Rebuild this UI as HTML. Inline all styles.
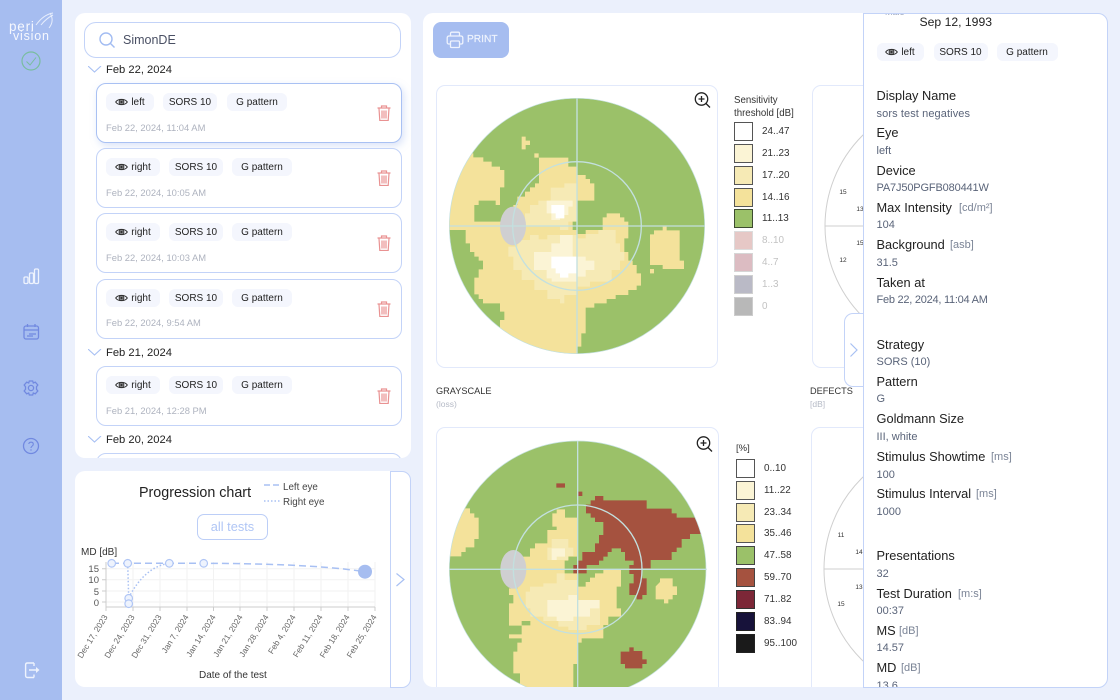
<!DOCTYPE html>
<html><head><meta charset="utf-8"><style>
html,body{margin:0;padding:0;width:1120px;height:700px;overflow:hidden;background:#ebf0fc;font-family:"Liberation Sans",sans-serif;color:#222}
*{box-sizing:border-box}
#r{position:absolute;left:0;top:0;width:1120px;height:700px;overflow:hidden;background:#ebf0fc;filter:blur(.35px)}
.a{position:absolute}
.t{position:absolute;white-space:nowrap;line-height:16px}
.side{left:0;top:0;width:62px;height:700px;background:#a6bdf0}
.panel{background:#fff;border-radius:10px}
.card{position:absolute;left:96px;width:306px;height:60px;border:1.5px solid #c3d3f8;border-radius:10px;background:#fff}
.chip{position:absolute;height:18px;background:#f4f6fd;border-radius:6px;font-size:10px;line-height:20px;color:#222;text-align:center;white-space:nowrap}
.date{font-size:9.4px;color:#aeb3bf;margin-top:1px}
.day{font-size:11.2px;color:#222;margin-top:1px}
.l{font-size:12.8px;color:#222;margin-top:-1px}
.v{font-size:11px;color:#5a6479}
.u{font-size:11px;color:#7b8496;margin-top:0}
.sw{position:absolute;width:19px;height:19px;border:1.5px solid #555}
.lg{font-size:9.900px;color:#333;margin-top:1px}
</style></head><body><div id="r">
<div class="a side"></div>

<svg class="a" style="left:0;top:0" width="62" height="700" viewBox="0 0 62 700" fill="none">
<path d="M36 25C41 18 47 14 53 13M41 25C45 20 49 17 53 15M50 13C53 18 53 23 49 28" stroke="#e6edfc" stroke-width="1"/>
<circle cx="31" cy="61" r="9" stroke="#79bd9f" stroke-width="1.2"/><path d="M26.500 61.500L30 65L36 57.500" stroke="#79bd9f"/>
<g stroke="#eef3fd" stroke-width="1.300"><rect x="24" y="277" width="4" height="6.500" rx="1.200"/><rect x="29.500" y="273" width="4" height="10.500" rx="1.200"/><rect x="34.500" y="269" width="4" height="14.500" rx="1.200"/></g>
<g stroke="#7189e0" stroke-width="1.300"><rect x="24" y="326" width="14.500" height="13" rx="2"/><path d="M24 330H38.500M27.500 324V327M35 324V327M27 336H33M29 334H36"/></g>
<g stroke="#7189e0" stroke-width="1.300"><circle cx="31" cy="388" r="2.600"/><path d="M29.300 381H32.700L33.300 383L35.300 382.200L37.800 385L36.500 386.700V389.300L37.800 391L35.300 393.800L33.300 393L32.700 395H29.300L28.700 393L26.700 393.800L24.200 391L25.500 389.300V386.700L24.200 385L26.700 382.200L28.700 383Z"/></g>
<circle cx="31" cy="446" r="7.500" stroke="#7189e0" stroke-width="1.300"/>
<path d="M28.800 444C29 441.500 33.300 441.500 33.300 444.200C33.300 446 31 446 31 448" stroke="#7189e0" stroke-width="1.100"/><circle cx="31" cy="450" r=".7" fill="#7189e0"/>
<path d="M34 663H27.500C26.300 663 25.600 663.800 25.600 665V675.500C25.600 676.700 26.300 677.500 27.500 677.500H34M34 663V666M34 677.500V674.500M29 670H37" stroke="#eef3fd" stroke-width="1.400"/><path d="M36 667L39.500 670L36 673Z" fill="#eef3fd"/>
</svg>
<div class="t" style="left:9px;top:21px;font-size:13.500px;color:#f6f8fe;letter-spacing:.8px;line-height:12px">peri</div>
<div class="t" style="left:13px;top:30px;font-size:12.500px;color:#f6f8fe;letter-spacing:.8px;line-height:12px">vision</div>

<!-- left list -->
<div class="a panel" style="left:75px;top:13px;width:336px;height:445px"></div>
<div class="a" style="left:84px;top:22px;width:317px;height:36px;border:1.5px solid #c3d3f8;border-radius:12px;background:#fff"></div>
<svg class="a" style="left:98px;top:31px" width="18" height="18" fill="none" stroke="#a2bcf2" stroke-width="1.400"><circle cx="8" cy="8" r="6"/><path d="M12.500 12.500L16.500 16.500"/></svg>
<div class="t" style="left:123px;top:32px;font-size:12.500px;color:#4a5064">SimonDE</div>

<svg width="0" height="0" style="position:absolute"><defs>
<g id="eye" fill="none" stroke="#333" stroke-width="1.100"><path d="M.7 5C3 1.500 10 1.500 12.300 5C10 8.500 3 8.500 .7 5Z"/><circle cx="6.500" cy="5" r="2.300"/><circle cx="6.500" cy="5" r=".8" fill="#333"/></g>
<g id="bin" fill="none" stroke="#e99292" stroke-width="1.200"><path d="M.5 3H13.500M4.500 2.500V1H9.500V2.500M2 3.500L2.800 15.500H11.200L12 3.500M5 5.500V13.500M7 5.500V13.500M9 5.500V13.500"/></g>
<path id="chev" d="M0 0L6.500 6L13 0" fill="none" stroke="#a8c0f3" stroke-width="1.100"/>
</defs></svg>

<svg class="a" style="left:88px;top:66px" width="14" height="8"><use href="#chev"/></svg>
<div class="t day" style="left:106px;top:61px">Feb 22, 2024</div>

<div class="card" style="top:82.500px;border-color:#a9c1f3;box-shadow:2px 3px 8px rgba(150,175,235,.35)"></div>
<div class="card" style="top:148px"></div>
<div class="card" style="top:213px"></div>
<div class="card" style="top:278.500px"></div>
<div class="card" style="top:366px"></div>
<div class="a" style="left:96px;top:453px;width:306px;height:5px;overflow:hidden"><div style="width:306px;height:30px;border:1.500px solid #c3d3f8;border-radius:10px"></div></div>

<!-- row 1 -->
<div class="chip" style="left:106px;top:93px;width:48px;padding-left:16px">left</div><svg class="a" style="left:115px;top:97px" width="13" height="10"><use href="#eye"/></svg>
<div class="chip" style="left:163px;top:93px;width:54px">SORS 10</div><div class="chip" style="left:227px;top:93px;width:60px">G pattern</div>
<div class="t date" style="left:106px;top:119px">Feb 22, 2024, 11:04 AM</div><svg class="a" style="left:377px;top:105px" width="14" height="16"><use href="#bin"/></svg>
<!-- row 2 -->
<div class="chip" style="left:106px;top:158px;width:54px;padding-left:16px">right</div><svg class="a" style="left:115px;top:162px" width="13" height="10"><use href="#eye"/></svg>
<div class="chip" style="left:169px;top:158px;width:54px">SORS 10</div><div class="chip" style="left:232px;top:158px;width:60px">G pattern</div>
<div class="t date" style="left:106px;top:184px">Feb 22, 2024, 10:05 AM</div><svg class="a" style="left:377px;top:170px" width="14" height="16"><use href="#bin"/></svg>
<!-- row 3 -->
<div class="chip" style="left:106px;top:223px;width:54px;padding-left:16px">right</div><svg class="a" style="left:115px;top:227px" width="13" height="10"><use href="#eye"/></svg>
<div class="chip" style="left:169px;top:223px;width:54px">SORS 10</div><div class="chip" style="left:232px;top:223px;width:60px">G pattern</div>
<div class="t date" style="left:106px;top:249px">Feb 22, 2024, 10:03 AM</div><svg class="a" style="left:377px;top:235px" width="14" height="16"><use href="#bin"/></svg>
<!-- row 4 -->
<div class="chip" style="left:106px;top:289px;width:54px;padding-left:16px">right</div><svg class="a" style="left:115px;top:293px" width="13" height="10"><use href="#eye"/></svg>
<div class="chip" style="left:169px;top:289px;width:54px">SORS 10</div><div class="chip" style="left:232px;top:289px;width:60px">G pattern</div>
<div class="t date" style="left:106px;top:314px">Feb 22, 2024, 9:54 AM</div><svg class="a" style="left:377px;top:301px" width="14" height="16"><use href="#bin"/></svg>

<svg class="a" style="left:88px;top:349px" width="14" height="8"><use href="#chev"/></svg>
<div class="t day" style="left:106px;top:344px">Feb 21, 2024</div>
<div class="chip" style="left:106px;top:376px;width:54px;padding-left:16px">right</div><svg class="a" style="left:115px;top:380px" width="13" height="10"><use href="#eye"/></svg>
<div class="chip" style="left:169px;top:376px;width:54px">SORS 10</div><div class="chip" style="left:232px;top:376px;width:60px">G pattern</div>
<div class="t date" style="left:106px;top:402px">Feb 21, 2024, 12:28 PM</div><svg class="a" style="left:377px;top:388px" width="14" height="16"><use href="#bin"/></svg>
<svg class="a" style="left:88px;top:436px" width="14" height="8"><use href="#chev"/></svg>
<div class="t day" style="left:106px;top:431px">Feb 20, 2024</div>

<!-- progression chart -->
<div class="a" style="left:75px;top:471px;width:316px;height:216px;background:#fff;border-radius:10px 0 0 10px"></div>
<div class="a" style="left:390px;top:471px;width:21px;height:217px;background:#fff;border:1.500px solid #c3d3f8;border-radius:0 9px 9px 0"></div>
<svg class="a" style="left:395px;top:572px" width="12" height="16" fill="none" stroke="#a8c0f3" stroke-width="1.200"><path d="M1.500 1.500L9 7.500L1.500 14"/></svg>
<div class="t" style="left:139px;top:485px;font-size:14.300px;color:#222">Progression chart</div>
<div class="t" style="left:283px;top:478px;font-size:9.800px;color:#444;margin-top:1.500px">Left eye</div>
<div class="t" style="left:283px;top:493px;font-size:9.800px;color:#444;margin-top:1.500px">Right eye</div>
<div class="a" style="left:197px;top:514px;width:71px;height:26px;border:1.500px solid #bccef7;border-radius:7px;color:#b0c6f5;font-size:12.800px;line-height:23px;text-align:center">all tests</div>
<div class="t" style="left:81px;top:544.500px;font-size:10px;color:#333">MD [dB]</div>
<svg class="a" style="left:75px;top:471px" width="316" height="217" viewBox="75 471 316 217" fill="none">
<path d="M264 485H280" stroke="#a8c0f3" stroke-width="1.500" stroke-dasharray="6 3"/><path d="M264 501H280" stroke="#a8c0f3" stroke-width="1.500" stroke-dasharray="1.500 2"/>
<g stroke="#f2f2f2"><path d="M106 562V607M133 562V607M160 562V607M187 562V607M213.500 562V607M240 562V607M267 562V607M294 562V607M321 562V607M348 562V607M375 562V607"/><path d="M106 568.700H375M106 579.700H375M106 591H375M106 602H375"/></g>
<path d="M106 607H375M106 607V562M106 607V611M133 607V611M160 607V611M187 607V611M213.500 607V611M240 607V611M267 607V611M294 607V611M321 607V611M348 607V611M375 607V611M102 568.700H106M102 579.700H106M102 591H106M102 602H106" stroke="#ccc"/>
<g fill="#555" font-size="9.500" font-family="Liberation Sans" text-anchor="end"><text x="99" y="572">15</text><text x="99" y="583">10</text><text x="99" y="595">5</text><text x="99" y="606">0</text></g>
<g fill="#666" font-size="8.300" font-family="Liberation Sans" text-anchor="end">
<text transform="translate(108 617) rotate(-58)">Dec 17, 2023</text><text transform="translate(135 617) rotate(-58)">Dec 24, 2023</text><text transform="translate(162 617) rotate(-58)">Dec 31, 2023</text><text transform="translate(189 617) rotate(-58)">Jan 7, 2024</text><text transform="translate(216 617) rotate(-58)">Jan 14, 2024</text><text transform="translate(243 617) rotate(-58)">Jan 21, 2024</text><text transform="translate(269 617) rotate(-58)">Jan 28, 2024</text><text transform="translate(296 617) rotate(-58)">Feb 4, 2024</text><text transform="translate(323 617) rotate(-58)">Feb 11, 2024</text><text transform="translate(350 617) rotate(-58)">Feb 18, 2024</text><text transform="translate(377 617) rotate(-58)">Feb 25, 2024</text></g>
<path d="M112 563.300H204C260 563.500 320 565 365 571.700" stroke="#a8c0f3" stroke-width="1.500" stroke-dasharray="7 4"/>
<path d="M127.700 563.300L128.700 598C135 585 148 566 169.300 563.300" stroke="#a8c0f3" stroke-width="1.500" stroke-dasharray="1.500 2"/>
<g fill="#eef3fd" stroke="#afc5f5" stroke-width="1.200"><circle cx="111.700" cy="563.300" r="3.800"/><circle cx="127.700" cy="563.300" r="3.800"/><circle cx="128.700" cy="598.300" r="3.800"/><circle cx="128.700" cy="603.700" r="3.800"/><circle cx="169.300" cy="563.300" r="3.800"/><circle cx="203.700" cy="563.300" r="3.800"/></g>
<circle cx="365" cy="571.700" r="7" fill="#a6bdf0"/>
</svg>
<div class="t" style="left:199px;top:667px;font-size:10px;color:#333;margin-top:.5px">Date of the test</div>

<!-- main panel -->
<div class="a panel" style="left:423px;top:13px;width:684px;height:674px;overflow:hidden" id="m">
<div class="a" style="left:10px;top:9px;width:76px;height:36px;background:#a6bdf0;border-radius:8px"></div>
<svg class="a" style="left:23px;top:18px" width="18" height="18" fill="none" stroke="#eef3fd" stroke-width="1.300"><path d="M4.500 5V2.500C4.500 1.700 5 1.200 5.800 1.200H12.200C13 1.200 13.500 1.700 13.500 2.500V5M4 13H2.800C1.800 13 1.200 12.400 1.200 11.400V7C1.200 5.800 2 5 3.200 5H14.800C16 5 16.800 5.800 16.800 7V11.400C16.800 12.400 16.200 13 15.200 13H14"/><rect x="4.500" y="10" width="9" height="6.500" rx="1"/></svg>
<div class="t" style="left:44px;top:19px;font-size:10.200px;color:#eef3fd;-webkit-text-stroke:.2px #eef3fd">PRINT</div>

<div class="a" style="left:13px;top:72px;width:282px;height:283px;border:1px solid #e2e9fb;border-radius:9px"></div>
<div class="a" style="left:389px;top:72px;width:120px;height:283px;border:1px solid #e2e9fb;border-radius:9px"></div>
<div class="a" style="left:12.500px;top:414px;width:283px;height:300px;border:1px solid #e2e9fb;border-radius:9px"></div>
<div class="a" style="left:388px;top:414px;width:120px;height:300px;border:1px solid #e2e9fb;border-radius:9px"></div>

<div class="t" style="left:13px;top:370px;font-size:9.200px;color:#333">GRAYSCALE</div>
<div class="t" style="left:13px;top:383px;font-size:8.500px;color:#b5bac6">(loss)</div>
<div class="t" style="left:387px;top:370px;font-size:9.200px;color:#333">DEFECTS</div>
<div class="t" style="left:387px;top:383px;font-size:8.500px;color:#b5bac6">[dB]</div>

<!-- field 1 -->
<svg class="a" style="left:7px;top:67px" width="300" height="300" viewBox="0 0 900 900" shape-rendering="geometricPrecision">
<defs><clipPath id="c1"><circle cx="441" cy="438" r="383"/></clipPath></defs>
<g clip-path="url(#c1)"><rect width="900" height="900" fill="#9bc169"/>
<path fill="#f4e29b" d="M40 220H130V232H160V245H185V260H210V270H223V322H210V375H197V362H146V375H133V425H215L235 385H250V375H262V350H285V335H300V322H315V310H327V233H415V260H441V285H467V297H480V310H493V362H441V462H467V450H518V412H530V400H570V412H583V425H595V475H583V516H595V542H608V555H620V580H633V617H620V630H595V645H557V657H530V670H493V683H467V760H454V800H441V840H200V745H210V720H223V695H210V670H159V657H146V643H133V593H146V568H159V542H146V530H133V516H120V490H107V450H40Z"/>
<path fill="#f4e29b" d="M660 463H672V451H698V440H710V451H749V542H762V567H698V555H660ZM660 567H672V580H660ZM275 170H287V182H300V195H287V208H275ZM313 220H326V233H313Z"/>
<path fill="#f6eab5" d="M362 323H403V310H441V425H415V450H390V440H285V400H300V375H325V362H362ZM235 500H262V480H300V465H441V475H467V462H505V450H557V490H570V516H583V542H570V570H545V605H480V620H441V645H403V670H390V657H352V630H313V600H275V570H250V530H235Z"/>
<path fill="#fbf4d5" d="M350 362H428V380H415V405H390V420H364V400H350ZM312 516H364V490H390V465H428V530H467V542H493V570H467V590H441V605H365V595H350V570H312Z"/>
<path fill="#fff" d="M364 375H403V362H403V415H377V400H364ZM364 530H441V580H415V593H390V580H377V565H364Z"/>
<path fill="#f4e29b" d="M326 465H352V478H326Z"/>
<path fill="#9bc169" d="M428 425H441V438H428ZM428 438H441V450H428Z"/>
<ellipse cx="249" cy="438" rx="39" ry="58" fill="#cfcfd1"/></g>
<g fill="none" stroke="#c3e0df" stroke-width="4"><path d="M57 438H825M441 55V822" /><circle cx="441" cy="438" r="193"/></g>
<circle cx="441" cy="438" r="383" fill="none" stroke="#c3e0df" stroke-width="2"/>
</svg>

<!-- field 2 -->
<svg class="a" style="left:7px;top:407px" width="300" height="280" viewBox="0 0 900 840">
<defs><clipPath id="c2"><circle cx="443" cy="448" r="385"/></clipPath></defs>
<g clip-path="url(#c2)"><rect width="900" height="900" fill="#9bc169"/>
<path fill="#f4e29b" d="M100 265H120V280H133V293H146V357H133V382H107V396H94V409H40V265ZM677 499L690 486V475H728V499H741V525H728V538H715V550H702V538H677Z"/>
<path fill="#f4e29b" d="M367 280H380V268H405V293H441V410H415V422H404V460H441V500H467V486H480V473H495V460H520V450H573V500H560V565H573V590H535V615H520V655H455V668H443V860H270V760H250V695H262V668H275V655H237V643H275V617H237V550H250V525H237V505H262V410H300V385H315V370H352V330H380V320H367Z"/>
<path fill="#9bc169" d="M275 603H301V616H275ZM430 732H441V810H430Z"/>
<path fill="#f6eab5" d="M352 383H365V357H415V383H430V408H415V420H395V460H380V490H340V500H300V515H287V565H301V590H340V603H385V620H415V630H470V615H510V540H441V480H404V460H395V420H352Z"/>
<path fill="#fbf4d5" d="M365 385H405V410H380V420H365ZM352 540H415V525H441V540H508V565H480V590H430V603H380V590H352Z"/>
<path fill="#a5523f" d="M495 228H520V241H650V266H725V280H740V293H800L820 342H780V357H755V383H740V396H725V420H662V445H637V475H650V525H637V538H620V525H598V490H611V462H598V435H611V422H585V396H573V385H545V396H533V410H520V422H507V435H470V460H430V435H445V422H457V396H495V370H507V345H520V306H495V293H482V280H468V254H482V241H495ZM379 190H405V203H379ZM445 215H457V228H445ZM598 682H611V693H637V718H650V732H637V745H585V732H572V695H598Z"/>
<ellipse cx="250" cy="448" rx="39" ry="58" fill="#cfcfd1"/></g>
<g fill="none" stroke="#c3e0df" stroke-width="4"><path d="M58 448H830M443 63V840"/><circle cx="443" cy="448" r="193"/></g>
<circle cx="443" cy="448" r="385" fill="none" stroke="#c3e0df" stroke-width="2"/>
</svg>

<!-- zoom icons -->
<svg class="a" style="left:270px;top:78px" width="18" height="18" fill="none" stroke="#222" stroke-width="1.300"><circle cx="8.500" cy="8" r="6.200"/><path d="M8.500 5V11M5.500 8H11.500M13 12.500L17 16.500"/></svg>
<svg class="a" style="left:272px;top:422px" width="18" height="18" fill="none" stroke="#222" stroke-width="1.300"><circle cx="8.500" cy="8" r="6.200"/><path d="M8.500 5V11M5.500 8H11.500M13 12.500L17 16.500"/></svg>

<!-- right fields partial -->
<svg class="a" style="left:389px;top:72px" width="60" height="290" viewBox="812 85 60 290" fill="none"><circle cx="953" cy="226" r="128" stroke="#cfcfcf" stroke-width="1"/><path d="M825 226H870" stroke="#cfcfcf"/>
<g fill="#333" font-size="6.500" font-family="Liberation Sans" text-anchor="middle"><text x="843" y="194">15</text><text x="860" y="211">13</text><text x="860" y="245">15</text><text x="843" y="262">12</text></g></svg>
<svg class="a" style="left:388px;top:414px" width="60" height="260" viewBox="811 427 60 260" fill="none"><circle cx="952" cy="569" r="128" stroke="#cfcfcf" stroke-width="1"/><path d="M824 569H870" stroke="#cfcfcf"/>
<g fill="#333" font-size="6.500" font-family="Liberation Sans" text-anchor="middle"><text x="841" y="537">11</text><text x="859" y="554">14</text><text x="859" y="589">13</text><text x="841" y="606">15</text></g></svg>
</div>

<!-- legend 1 -->
<div class="t" style="left:734px;top:93px;font-size:9.700px;color:#333">Sensitivity</div>
<div class="t" style="left:734px;top:106px;font-size:9.700px;color:#333">threshold [dB]</div>
<div class="sw" style="left:734px;top:122px;background:#fff"></div><div class="t lg" style="left:762px;top:123px">24..47</div>
<div class="sw" style="left:734px;top:143.500px;background:#fbf4d5"></div><div class="t lg" style="left:762px;top:145px">21..23</div>
<div class="sw" style="left:734px;top:165.500px;background:#f6eab5"></div><div class="t lg" style="left:762px;top:167px">17..20</div>
<div class="sw" style="left:734px;top:187.500px;background:#f4e29b"></div><div class="t lg" style="left:762px;top:189px">14..16</div>
<div class="sw" style="left:734px;top:209px;background:#9bc169;border-color:#3c4a30"></div><div class="t lg" style="left:762px;top:210px">11..13</div>
<div class="sw" style="left:734px;top:231px;background:#e6c8c6;border-color:#dcdcdc"></div><div class="t lg" style="left:762px;top:232px;color:#c2c2c2">8..10</div>
<div class="sw" style="left:734px;top:253px;background:#dcbcc2;border-color:#d6d6d6"></div><div class="t lg" style="left:762px;top:254px;color:#c2c2c2">4..7</div>
<div class="sw" style="left:734px;top:274.500px;background:#babac6;border-color:#d0d0d0"></div><div class="t lg" style="left:762px;top:276px;color:#c2c2c2">1..3</div>
<div class="sw" style="left:734px;top:296.500px;background:#b8b8b8;border-color:#ccc"></div><div class="t lg" style="left:762px;top:298px;color:#c2c2c2">0</div>

<!-- legend 2 -->
<div class="t" style="left:736px;top:441px;font-size:9.500px;color:#333">[%]</div>
<div class="sw" style="left:736px;top:459px;background:#fff"></div><div class="t lg" style="left:764px;top:460px">0..10</div>
<div class="sw" style="left:736px;top:480.500px;background:#fbf4d5"></div><div class="t lg" style="left:764px;top:482px">11..22</div>
<div class="sw" style="left:736px;top:502.500px;background:#f6eab5"></div><div class="t lg" style="left:764px;top:504px">23..34</div>
<div class="sw" style="left:736px;top:524px;background:#f4e29b"></div><div class="t lg" style="left:764px;top:525px">35..46</div>
<div class="sw" style="left:736px;top:546px;background:#9bc169;border-color:#444"></div><div class="t lg" style="left:764px;top:547px">47..58</div>
<div class="sw" style="left:736px;top:568px;background:#a5523f;border-color:#444"></div><div class="t lg" style="left:764px;top:569px">59..70</div>
<div class="sw" style="left:736px;top:590px;background:#7c2737;border-color:#333"></div><div class="t lg" style="left:764px;top:591px">71..82</div>
<div class="sw" style="left:736px;top:611.500px;background:#17123a;border-color:#222"></div><div class="t lg" style="left:764px;top:613px">83..94</div>
<div class="sw" style="left:736px;top:633.500px;background:#1a1a1a;border-color:#222"></div><div class="t lg" style="left:764px;top:635px">95..100</div>

<!-- collapse tab -->
<div class="a" style="left:844px;top:313px;width:21px;height:74px;background:#fff;border:1.500px solid #c3d3f8;border-right:0;border-radius:9px 0 0 9px"></div>
<svg class="a" style="left:849px;top:342px" width="10" height="16" fill="none" stroke="#a8c0f3" stroke-width="1.200"><path d="M1.500 1.500L8 8L1.500 14.500"/></svg>

<!-- right detail panel -->
<div class="a" style="left:863px;top:12.500px;width:244.500px;height:675px;background:#fff;border:1.200px solid #c3d3f8;border-left:1.500px solid #c3d3f8;border-radius:0 10px 10px 0;overflow:hidden">
<div class="t" style="left:21px;top:-10px;font-size:9px;color:#9aa6bf">Male</div>
<div class="t" style="left:55.500px;top:0px;font-size:12.200px;color:#222">Sep 12, 1993</div>
<div class="chip" style="left:12.500px;top:29.300px;width:47px;padding-left:16px">left</div>
<svg class="a" style="left:21px;top:33.500px" width="13" height="10"><use href="#eye"/></svg>
<div class="chip" style="left:69.500px;top:29.300px;width:54px">SORS 10</div>
<div class="chip" style="left:132.500px;top:29.300px;width:61px">G pattern</div>

<div class="t l" style="left:12.500px;top:75px">Display Name</div><div class="t v" style="left:12.500px;top:92px;letter-spacing:.1px">sors test negatives</div>
<div class="t l" style="left:12.500px;top:112px">Eye</div><div class="t v" style="left:12.500px;top:129px">left</div>
<div class="t l" style="left:12.500px;top:150px">Device</div><div class="t v" style="left:12.500px;top:166px;letter-spacing:-.15px">PA7J50PGFB080441W</div>
<div class="t l" style="left:12.500px;top:187px">Max Intensity</div><div class="t u" style="left:95px;top:186px">[cd/m²]</div><div class="t v" style="left:12.500px;top:203px">104</div>
<div class="t l" style="left:12.500px;top:224px">Background</div><div class="t u" style="left:86px;top:223px">[asb]</div><div class="t v" style="left:12.500px;top:241px">31.5</div>
<div class="t l" style="left:12.500px;top:262px">Taken at</div><div class="t v" style="left:12.500px;top:278px;letter-spacing:-.25px">Feb 22, 2024, 11:04 AM</div>

<div class="t l" style="left:12.500px;top:324px">Strategy</div><div class="t v" style="left:12.500px;top:340px">SORS (10)</div>
<div class="t l" style="left:12.500px;top:361px">Pattern</div><div class="t v" style="left:12.500px;top:377px">G</div>
<div class="t l" style="left:12.500px;top:398px">Goldmann Size</div><div class="t v" style="left:12.500px;top:415px">III, white</div>
<div class="t l" style="left:12.500px;top:436px">Stimulus Showtime</div><div class="t u" style="left:127px;top:435px">[ms]</div><div class="t v" style="left:12.500px;top:453px">100</div>
<div class="t l" style="left:12.500px;top:473px">Stimulus Interval</div><div class="t u" style="left:112px;top:472px">[ms]</div><div class="t v" style="left:12.500px;top:490px">1000</div>

<div class="t l" style="left:12.500px;top:535px">Presentations</div><div class="t v" style="left:12.500px;top:552px">32</div>
<div class="t l" style="left:12.500px;top:573px">Test Duration</div><div class="t u" style="left:94px;top:572px">[m:s]</div><div class="t v" style="left:12.500px;top:589px">00:37</div>
<div class="t l" style="left:12.500px;top:610px">MS</div><div class="t u" style="left:35px;top:609px">[dB]</div><div class="t v" style="left:12.500px;top:626px">14.57</div>
<div class="t l" style="left:12.500px;top:647px">MD</div><div class="t u" style="left:37px;top:646px">[dB]</div><div class="t v" style="left:12.500px;top:664px">13.6</div>
</div>
</div></body></html>
